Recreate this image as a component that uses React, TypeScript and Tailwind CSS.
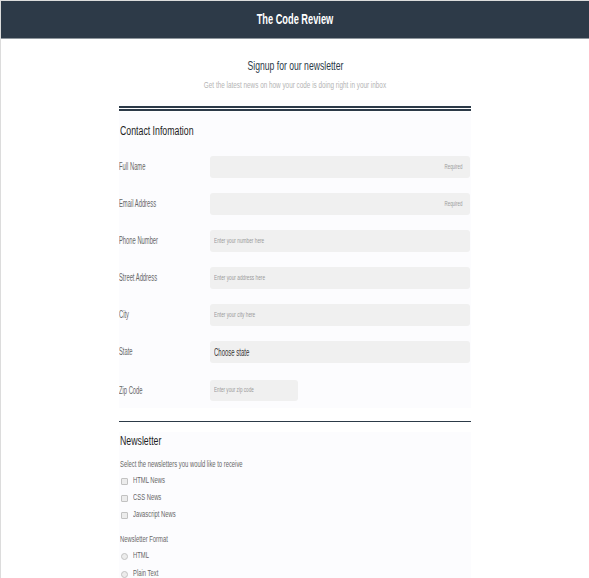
import type { ReactNode } from "react";

const font = "font-['Liberation_Sans',Arial,sans-serif]";

// condensed look: no narrow family is installed, so squeeze the glyphs
function Squeeze({ c, children }: { c: string; children: ReactNode }) {
  return <span className={`inline-block whitespace-nowrap ${c}`}>{children}</span>;
}

const fields = [
  { label: "Full Name", placeholder: "Required", right: true },
  { label: "Email Address", placeholder: "Required", right: true },
  { label: "Phone Number", placeholder: "Enter your number here" },
  { label: "Street Address", placeholder: "Enter your address here" },
  { label: "City", placeholder: "Enter your city here" },
];

const newsletters = ["HTML News", "CSS News", "Javascript News"];
const formats = ["HTML", "Plain Text"];

function Label({ text }: { text: string }) {
  return (
    <label className="w-[91px] text-[10px] leading-[14px] text-[#666]">
      <Squeeze c="origin-left scale-x-[0.58]">{text}</Squeeze>
    </label>
  );
}

function Field({ label, placeholder, right }: { label: string; placeholder: string; right?: boolean }) {
  return (
    <div className="flex items-center">
      <Label text={label} />
      <div
        className={`flex h-[22px] w-[260px] items-center rounded-[3px] bg-[#f0f0f0] text-[7px] text-[#9a9a9a] ${
          right ? "justify-end pr-[7px]" : "pl-[4px]"
        }`}
      >
        <Squeeze c={right ? "origin-right scale-x-[0.63]" : "origin-left scale-x-[0.68]"}>{placeholder}</Squeeze>
      </div>
    </div>
  );
}

function Option({ text, round }: { text: string; round?: boolean }) {
  return (
    <div className="flex h-[14px] items-center pl-[2px]">
      <span
        className={`h-[7px] w-[7px] border border-[#c2c2c2] bg-[#ececec] ${round ? "rounded-full" : "rounded-[1px]"}`}
      />
      <span className="ml-[5px] text-[9px] text-[#666]">
        <Squeeze c="origin-left scale-x-[0.65]">{text}</Squeeze>
      </span>
    </div>
  );
}

export default function App() {
  return (
    <div className={`min-h-screen border-l border-t border-[#dcdcdc] bg-white ${font}`}>
      <header className="flex h-[38px] items-center justify-center border-b border-[#8e969d] bg-[#2d3a48]">
        <h1 className="text-[14px] font-bold text-white">
          <Squeeze c="scale-x-[0.66]">The Code Review</Squeeze>
        </h1>
      </header>

      <main className="mx-auto w-[60%]">
        <h2 className="mt-[18px] text-center text-[12.5px] leading-[18px] text-[#2c3a48]">
          <Squeeze c="scale-x-[0.69]">Signup for our newsletter</Squeeze>
        </h2>
        <p className="mt-[3px] text-center text-[9.5px] leading-[14px] text-[#b4b4b4]">
          <Squeeze c="scale-x-[0.67]">Get the latest news on how your code is doing right in your inbox</Squeeze>
        </p>

        <div className="mt-[14px] border-t-[5px] border-double border-[#2c3a48]" />

        <section className="mt-[1px] bg-[#fcfcfe] pb-[7px] pt-[11px]">
          <h3 className="pl-[1px] text-[12px] leading-[16px] text-[#1e1e1e]">
            <Squeeze c="origin-left scale-x-[0.73]">Contact Infomation</Squeeze>
          </h3>
          <div className="mt-[17px] flex flex-col gap-[15px]">
            {fields.map((f) => (
              <Field key={f.label} {...f} />
            ))}
            <div className="flex items-center">
              <Label text="State" />
              <div className="flex h-[22px] w-[260px] items-center rounded-[3px] bg-[#f0f0f0] pl-[4px] text-[10px] text-[#333]">
                <Squeeze c="origin-left scale-x-[0.6]">Choose state</Squeeze>
              </div>
            </div>
            <div className="mt-[2px] flex items-center">
              <Label text="Zip Code" />
              <div className="flex h-[21px] w-[88px] items-center rounded-[3px] bg-[#f0f0f0] pl-[4px] text-[7px] text-[#9a9a9a]">
                <Squeeze c="origin-left scale-x-[0.66]">Enter your zip code</Squeeze>
              </div>
            </div>
          </div>
        </section>

        <div className="mt-[13px] border-t border-[#2c3a48]" />

        <section className="mt-[10px] bg-[#fcfcfe] pt-[1px]">
          <h3 className="pl-[1px] text-[12px] leading-[16px] text-[#1e1e1e]">
            <Squeeze c="origin-left scale-x-[0.73]">Newsletter</Squeeze>
          </h3>
          <p className="mt-[8px] pl-[1px] text-[9px] leading-[14px] text-[#666]">
            <Squeeze c="origin-left scale-x-[0.65]">Select the newsletters you would like to receive</Squeeze>
          </p>
          <div className="mt-[3px] flex flex-col gap-[3px]">
            {newsletters.map((n) => (
              <Option key={n} text={n} />
            ))}
          </div>
          <p className="mt-[10px] pl-[1px] text-[9px] leading-[14px] text-[#666]">
            <Squeeze c="origin-left scale-x-[0.65]">Newsletter Format</Squeeze>
          </p>
          <div className="mt-[3px] flex flex-col gap-[4px]">
            {formats.map((n) => (
              <Option key={n} text={n} round />
            ))}
          </div>
        </section>
      </main>
    </div>
  );
}
